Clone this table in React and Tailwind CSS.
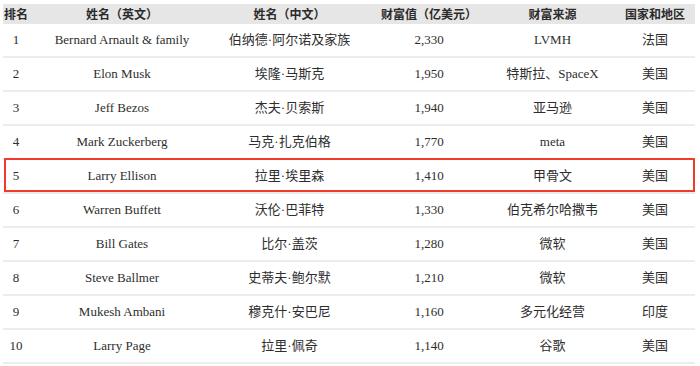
import React from 'react'

const rows = [
  ['1', 'Bernard Arnault & family', '伯纳德·阿尔诺及家族', '2,330', 'LVMH', '法国'],
  ['2', 'Elon Musk', '埃隆·马斯克', '1,950', '特斯拉、SpaceX', '美国'],
  ['3', 'Jeff Bezos', '杰夫·贝索斯', '1,940', '亚马逊', '美国'],
  ['4', 'Mark Zuckerberg', '马克·扎克伯格', '1,770', 'meta', '美国'],
  ['5', 'Larry Ellison', '拉里·埃里森', '1,410', '甲骨文', '美国'],
  ['6', 'Warren Buffett', '沃伦·巴菲特', '1,330', '伯克希尔哈撒韦', '美国'],
  ['7', 'Bill Gates', '比尔·盖茨', '1,280', '微软', '美国'],
  ['8', 'Steve Ballmer', '史蒂夫·鲍尔默', '1,210', '微软', '美国'],
  ['9', 'Mukesh Ambani', '穆克什·安巴尼', '1,160', '多元化经营', '印度'],
  ['10', 'Larry Page', '拉里·佩奇', '1,140', '谷歌', '美国'],
]

const headers = ['排名', '姓名（英文）', '姓名（中文）', '财富值（亿美元）', '财富来源', '国家和地区']

// 列宽按截图量出来的
const cols = 'grid grid-cols-[30px_178px_157px_122px_125px_80px]'

export default function App() {
  return (
    <div className="w-[700px] h-[366px] bg-white pt-[4px] pl-[3px] overflow-hidden">
      <div className="w-[692px]">
        <div
          className={`${cols} h-[20px] items-center bg-[#e6e6e6] text-[12px] font-bold text-[#2b2b2b]`}
          style={{ fontFamily: '"Noto Sans CJK SC", sans-serif' }}
        >
          {headers.map((h, i) => (
            <div key={i} className={i === 0 ? 'pl-[1px]' : 'text-center'}>
              {h}
            </div>
          ))}
        </div>

        {rows.map((r) => (
          <div
            key={r[0]}
            className={`${cols} relative h-[34px] items-center border-b-2 border-[#ececec] text-[13px] text-[#2e2e2e]`}
            style={{ fontFamily: '"Liberation Serif", "Noto Sans CJK SC", serif' }}
          >
            {r.map((c, i) => (
              <div key={i} className={i === 0 ? 'text-center pr-[4px]' : 'text-center'}>
                {c}
              </div>
            ))}
            {r[0] === '5' && (
              <div className="absolute left-[1px] right-0 top-[-2px] bottom-0 border-[2.5px] border-[#f23b2c]" />
            )}
          </div>
        ))}
      </div>
    </div>
  )
}
